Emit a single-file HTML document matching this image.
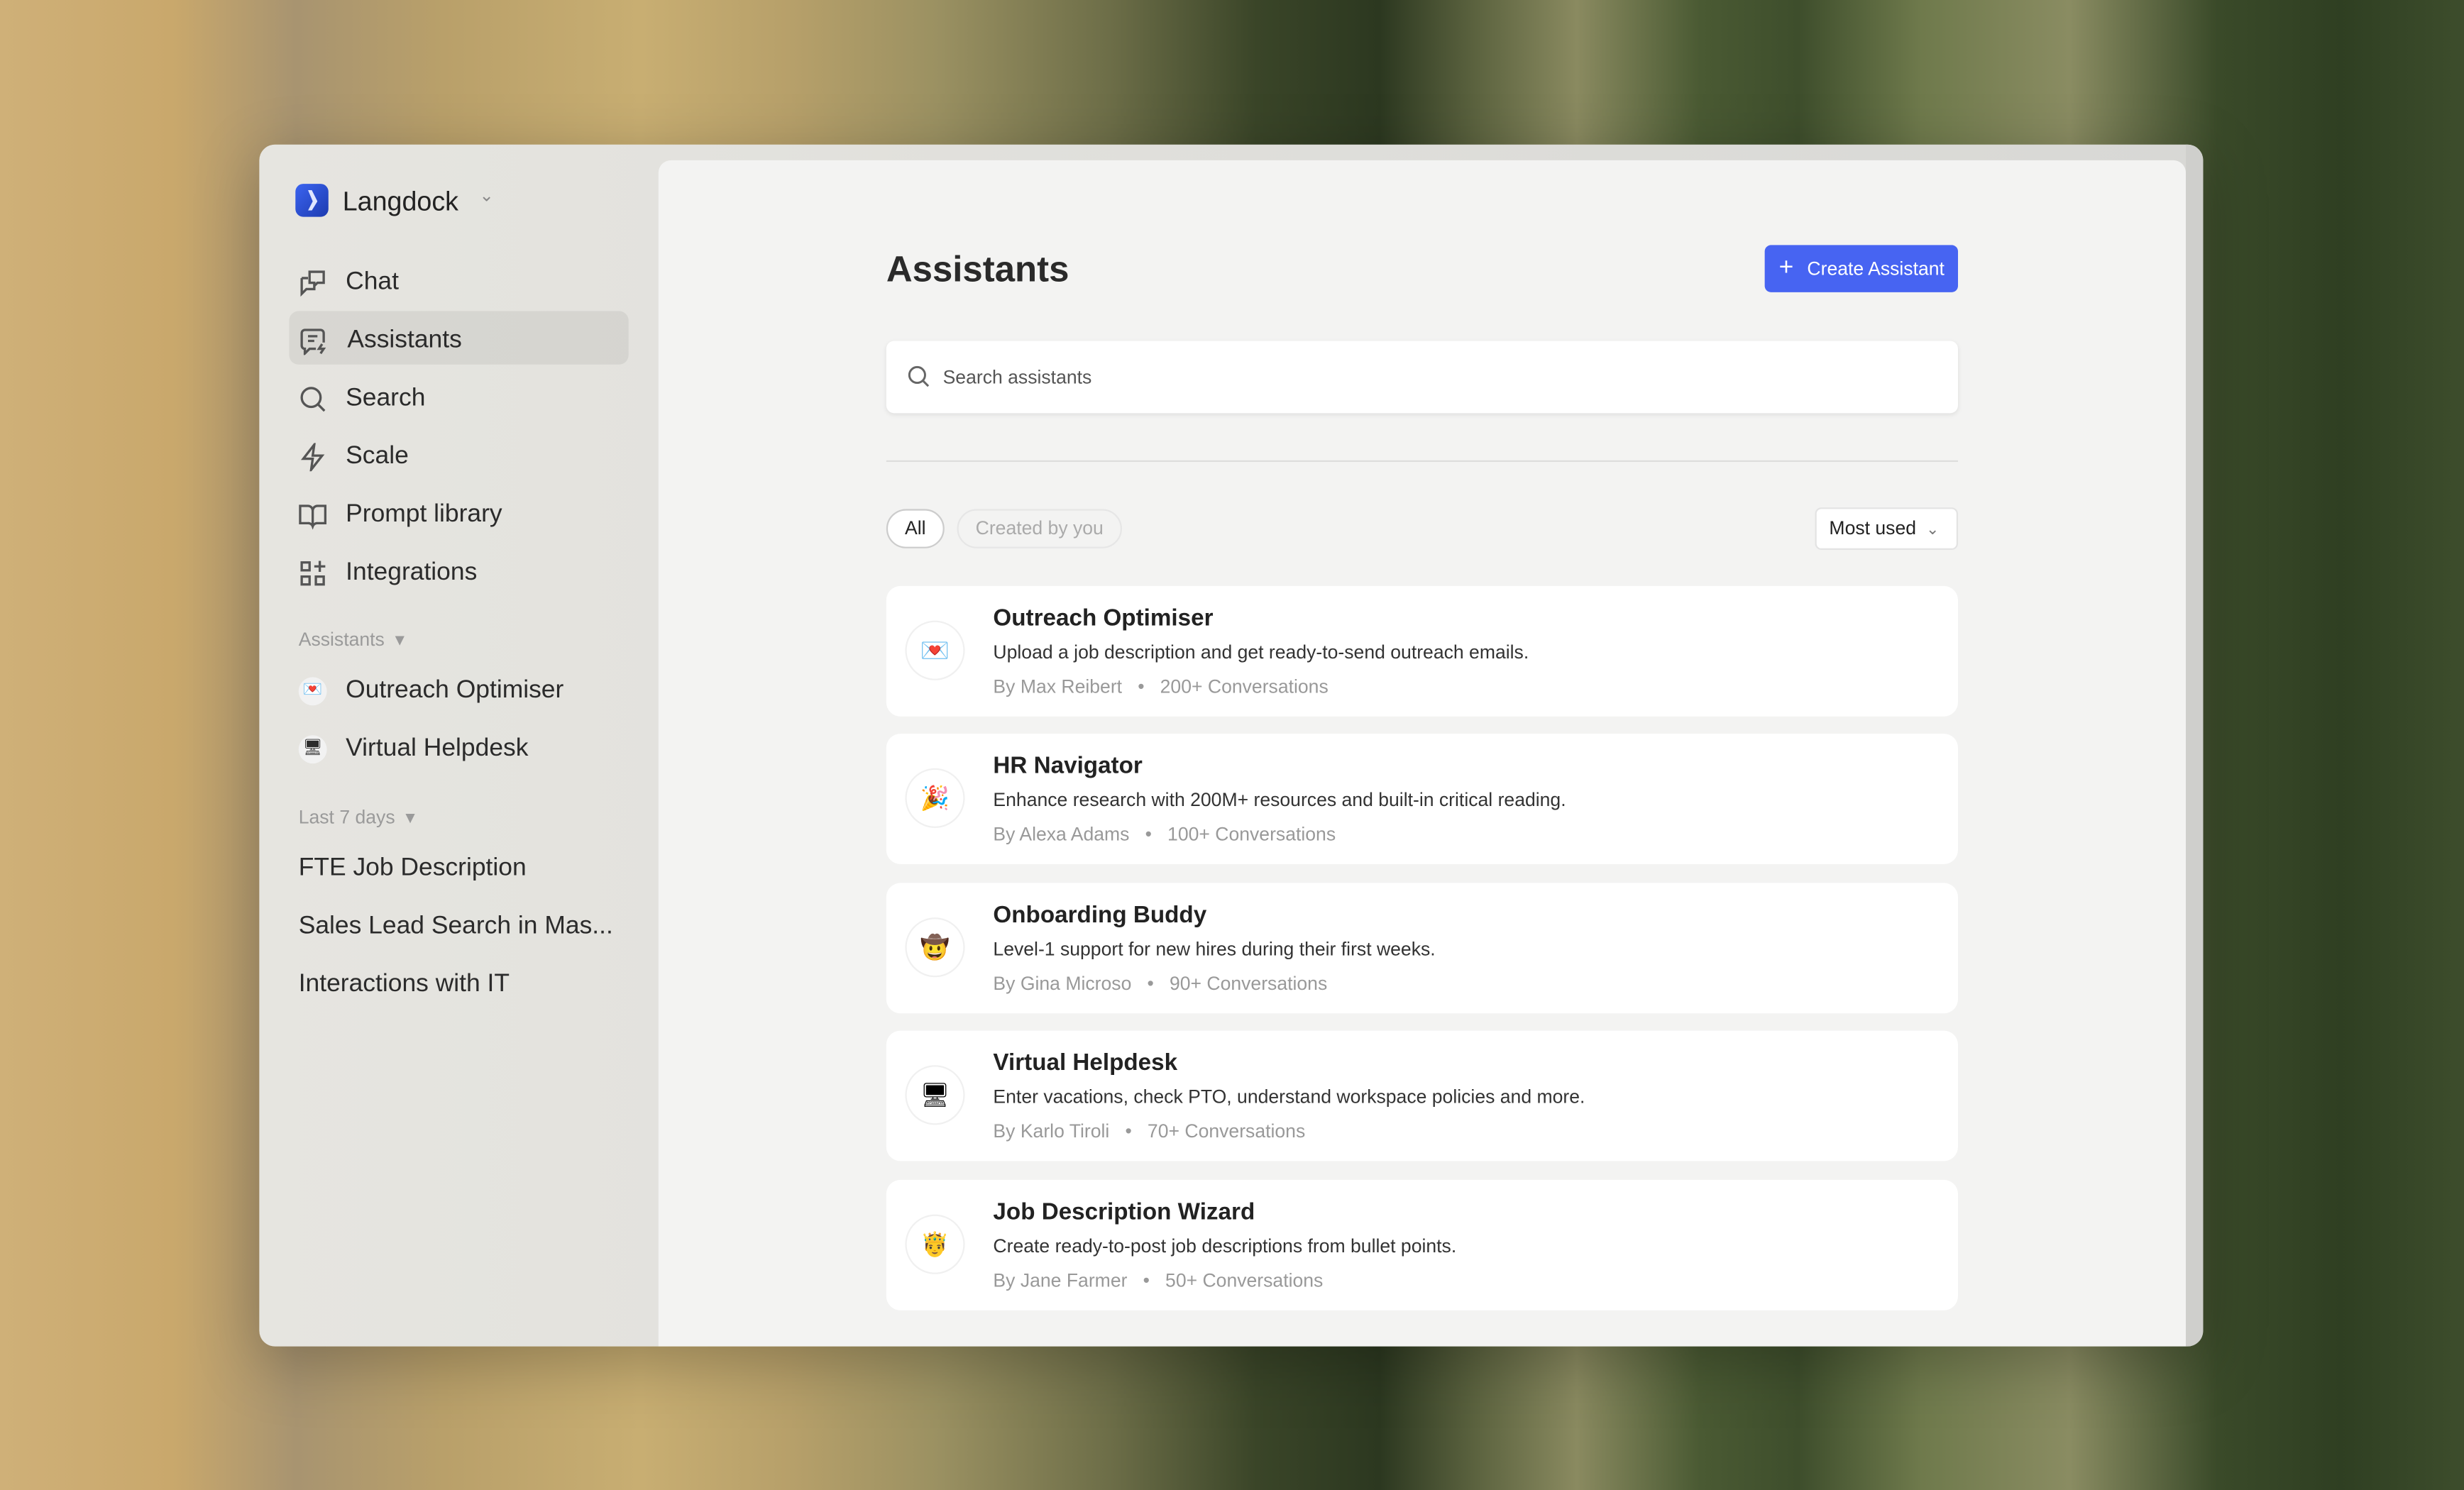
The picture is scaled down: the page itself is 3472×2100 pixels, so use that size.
<!DOCTYPE html>
<html><head><meta charset="utf-8"><style>
*{margin:0;padding:0;box-sizing:border-box}
html,body{width:3472px;height:2100px;overflow:hidden}
body{font-family:"Liberation Sans","Noto Sans CJK SC",sans-serif;background:linear-gradient(90deg,#cfb078 0%,#c9a86c 7%,#a89470 12%,#b9a06a 18%,#c8ae72 26%,#b7a06a 32%,#9b9162 38%,#6d6e48 45%,#3a4528 51%,#2c3820 56%,#5d6440 60%,#8a8a60 64%,#4a5a33 69%,#3e4e2c 73%,#6f7a4c 78%,#8a8c62 84%,#3a4a29 90%,#2f3f22 95%,#3d4d2c 100%)}
#s{position:absolute;left:0;top:0;width:1568px;height:948px;transform:scale(2.21429);transform-origin:0 0}
.win{position:absolute;left:165px;top:92px;width:1237px;height:765px;border-radius:10px;overflow:hidden;background:linear-gradient(90deg,#e6e5e0,#d8d8d5);box-shadow:0 10px 40px rgba(0,0,0,.25)}
.main{position:absolute;left:254px;top:10px;width:972px;height:755px;background:#f3f3f2;border-radius:8px 8px 0 0}
.rs{position:absolute;left:1226px;top:0;width:11px;height:765px;background:#cfcfcc}
.a{position:absolute;white-space:nowrap}
.nav{position:absolute;left:25px;font-size:16px;color:#2b2b2b;height:20px;line-height:20px;white-space:nowrap}
.nav svg{position:absolute;left:0;top:1px}
.nav span{position:absolute;left:30px;white-space:nowrap}
.sec{font-size:12px;color:#9a9a9a}
.card{position:absolute;left:145px;width:682px;height:83px;background:#fff;border-radius:9px}
.ic{position:absolute;left:12px;top:22px;width:38px;height:38px;border-radius:50%;border:1px solid #f0f0f0;text-align:center;line-height:38px;font-size:15px}
.t{position:absolute;left:68px;top:12px;font-size:15px;font-weight:bold;color:#222}
.d{position:absolute;left:68px;top:35px;font-size:12px;color:#333}
.m{position:absolute;left:68px;top:57px;font-size:12px;color:#999}
</style></head><body><div id="s">
<div class="win">
<div style="position:absolute;left:23px;top:25px;width:21px;height:21px;border-radius:5px;background:linear-gradient(135deg,#3b64f0,#1d3bb0)"><div style="position:absolute;left:8px;top:4px;width:6px;height:13px;background:#dfe6ff;clip-path:polygon(0 0,40% 0,100% 55%,40% 100%,0 100%,50% 55%)"></div></div>
<div class="a" style="left:53px;top:27px;font-size:17px;color:#222">Langdock</div>
<div class="a" style="left:140px;top:26px;font-size:11px;color:#888">⌄</div>
<div style="position:absolute;left:19px;top:106px;width:216px;height:34px;border-radius:6px;background:rgba(0,0,0,.06)"></div>
<div class="nav" style="top:78px"><svg width="18" height="18" viewBox="0 0 18 18" fill="none" stroke="#555" stroke-width="1.5"><path d="M7 2h9v7h-4l-2 2V9H7z M2 6h4 M2 6v10l3-3h5v-2"/></svg><span>Chat</span></div>
<div class="nav" style="top:115px"><svg width="18" height="18" viewBox="0 0 18 18" fill="none" stroke="#555" stroke-width="1.5"><path d="M4 2h10a2 2 0 0 1 2 2v6M11 14H7l-3 3v-3a2 2 0 0 1-2-2V4a2 2 0 0 1 2-2 M6 6h6M6 9h4 M15 11l-2 3h3l-2 3"/></svg><span style="left:31px">Assistants</span></div>
<div class="nav" style="top:152px"><svg width="18" height="18" viewBox="0 0 18 18" fill="none" stroke="#555" stroke-width="1.5"><circle cx="8" cy="8" r="6"/><path d="M12.5 12.5l4 4"/></svg><span>Search</span></div>
<div class="nav" style="top:189px"><svg width="18" height="18" viewBox="0 0 18 18" fill="none" stroke="#555" stroke-width="1.5"><path d="M10 1L3 10h6l-1 7 7-9H9z"/></svg><span>Scale</span></div>
<div class="nav" style="top:226px"><svg width="18" height="18" viewBox="0 0 18 18" fill="none" stroke="#555" stroke-width="1.5"><path d="M9 4v12M1 3h5a3 3 0 0 1 3 3 3 3 0 0 1 3-3h5v11h-5a3 3 0 0 0-3 2 3 3 0 0 0-3-2H1z"/></svg><span>Prompt library</span></div>
<div class="nav" style="top:263px"><svg width="18" height="18" viewBox="0 0 18 18" fill="none" stroke="#555" stroke-width="1.5"><rect x="2" y="2" width="5" height="5"/><rect x="2" y="11" width="5" height="5"/><rect x="11" y="11" width="5" height="5"/><path d="M13.5 1v7M10 4.5h7"/></svg><span>Integrations</span></div>
<div class="a sec" style="left:25px;top:308px">Assistants &nbsp;▾</div>
<div class="nav" style="top:338px"><span style="left:0;font-size:10px;width:18px;height:18px;border-radius:50%;background:#f2f2f2;text-align:center;line-height:18px;top:1px">💌</span><span>Outreach Optimiser</span></div>
<div class="nav" style="top:375px"><span style="left:0;font-size:10px;width:18px;height:18px;border-radius:50%;background:#f2f2f2;text-align:center;line-height:18px;top:1px">🖥</span><span>Virtual Helpdesk</span></div>
<div class="a sec" style="left:25px;top:421px">Last 7 days &nbsp;▾</div>
<div class="nav" style="top:451px;left:25px">FTE Job Description</div>
<div class="nav" style="top:488px;left:25px">Sales Lead Search in Mas...</div>
<div class="nav" style="top:525px;left:25px">Interactions with IT</div>
<div class="main">
<div class="a" style="left:145px;top:56px;font-size:23px;font-weight:bold;color:#2a2a2a">Assistants</div>
<div style="position:absolute;left:704px;top:54px;width:123px;height:30px;border-radius:4px;background:#4764f2;color:#fff;font-size:12px;line-height:30px;padding-left:27px;white-space:nowrap"><span style="position:absolute;left:9px;font-size:16px">+</span>Create Assistant</div>
<div style="position:absolute;left:145px;top:115px;width:682px;height:46px;background:#fff;border-radius:5px;box-shadow:0 1px 3px rgba(0,0,0,.08)"><svg style="position:absolute;left:13px;top:15px" width="15" height="15" viewBox="0 0 18 18" fill="none" stroke="#666" stroke-width="1.6"><circle cx="8" cy="8" r="6"/><path d="M12.5 12.5l4 4"/></svg><div class="a" style="left:36px;top:16px;font-size:12px;color:#555">Search assistants</div></div>
<div style="position:absolute;left:145px;top:191px;width:682px;height:1px;background:#ddd"></div>
<div style="position:absolute;left:145px;top:222px;width:37px;height:25px;border-radius:13px;border:1px solid #ccc;background:#fff;font-size:12px;text-align:center;line-height:23px;color:#222">All</div>
<div style="position:absolute;left:190px;top:222px;width:105px;height:25px;border-radius:13px;border:1px solid #e6e6e6;font-size:12px;text-align:center;line-height:23px;color:#aaa">Created by you</div>
<div style="position:absolute;left:736px;top:221px;width:91px;height:27px;border-radius:4px;border:1px solid #e3e3e3;background:#fff;font-size:12px;line-height:25px;padding-left:8px;color:#222;white-space:nowrap">Most used <span style="color:#777;font-size:10px;margin-left:3px">⌄</span></div>
<div class="card" style="top:271px"><div class="ic">💌</div><div class="t">Outreach Optimiser</div><div class="d">Upload a job description and get ready-to-send outreach emails.</div><div class="m">By Max Reibert &nbsp;&nbsp;•&nbsp;&nbsp; 200+ Conversations</div></div>
<div class="card" style="top:365px"><div class="ic">🎉</div><div class="t">HR Navigator</div><div class="d">Enhance research with 200M+ resources and built-in critical reading.</div><div class="m">By Alexa Adams &nbsp;&nbsp;•&nbsp;&nbsp; 100+ Conversations</div></div>
<div class="card" style="top:460px"><div class="ic">🤠</div><div class="t">Onboarding Buddy</div><div class="d">Level-1 support for new hires during their first weeks.</div><div class="m">By Gina Microso &nbsp;&nbsp;•&nbsp;&nbsp; 90+ Conversations</div></div>
<div class="card" style="top:554px"><div class="ic">🖥</div><div class="t">Virtual Helpdesk</div><div class="d">Enter vacations, check PTO, understand workspace policies and more.</div><div class="m">By Karlo Tiroli &nbsp;&nbsp;•&nbsp;&nbsp; 70+ Conversations</div></div>
<div class="card" style="top:649px"><div class="ic">🤴</div><div class="t">Job Description Wizard</div><div class="d">Create ready-to-post job descriptions from bullet points.</div><div class="m">By Jane Farmer &nbsp;&nbsp;•&nbsp;&nbsp; 50+ Conversations</div></div>
</div>
<div class="rs"></div>
</div>
</div></body></html>
